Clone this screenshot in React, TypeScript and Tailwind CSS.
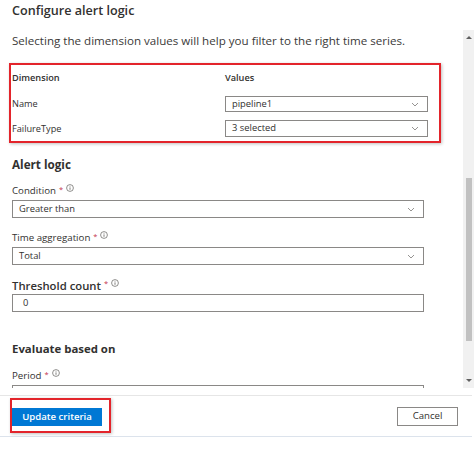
import React from "react";

const font = { fontFamily: '"Open Sans", "Noto Sans", sans-serif' };

const Chevron = () => (
  <svg width="8" height="5" viewBox="0 0 8 5" className="shrink-0">
    <path d="M1 1l3 3 3-3" fill="none" stroke="#8a8886" strokeWidth="0.9" />
  </svg>
);

const InfoIcon = () => (
  <svg width="8" height="8" viewBox="0 0 8 8" className="shrink-0">
    <circle cx="4" cy="4" r="3.4" fill="none" stroke="#605e5c" strokeWidth="0.7" />
    <path d="M4 3.4v2.4" stroke="#605e5c" strokeWidth="0.8" />
    <circle cx="4" cy="2.3" r="0.45" fill="#605e5c" />
  </svg>
);

interface FieldLabelProps {
  text: string;
  big?: boolean;
  className?: string;
}

const FieldLabel: React.FC<FieldLabelProps> = ({ text, big, className }) => (
  <div className={`flex items-start gap-[3px] text-[#323130] ${className ?? ""}`}>
    <span
      className={
        big
          ? "text-[11.3px] font-semibold leading-[15px]"
          : "text-[9.7px] leading-[14px]"
      }
    >
      {text}
    </span>
    <span className="text-[7.5px] leading-[11px] text-[#c4314b]">*</span>
    <span className={big ? "mt-[1px]" : "mt-0"}>
      <InfoIcon />
    </span>
  </div>
);

interface SelectBoxProps {
  value: string;
  className?: string;
  chevron?: boolean;
}

const SelectBox: React.FC<SelectBoxProps> = ({ value, className, chevron = true }) => (
  <div
    className={`flex items-center justify-between border border-[#8a8886] bg-white pl-[6px] pr-[8px] text-[9.4px] text-[#323130] ${className ?? ""}`}
  >
    <span>{value}</span>
    {chevron && <Chevron />}
  </div>
);

const Scrollbar = () => (
  <div className="flex w-[11px] shrink-0 flex-col items-center bg-[#f1f1f1]">
    <div className="flex h-[14px] items-center">
      <span className="h-0 w-0 border-x-[3px] border-b-[3px] border-x-transparent border-b-[#606060]" />
    </div>
    <div className="mt-[134px] h-[163px] w-[6px] bg-[#c1c1c1]" />
    <div className="flex flex-1 items-end pb-[6px]">
      <span className="h-0 w-0 border-x-[3px] border-t-[3px] border-x-transparent border-t-[#606060]" />
    </div>
  </div>
);

export default function App() {
  return (
    <div className="flex h-[450px] w-[474px] flex-col overflow-hidden bg-white" style={font}>
      <div className="flex h-[30px] items-start px-[12px] pt-[2px]">
        <h1 className="text-[12.6px] font-semibold leading-[17px] text-[#323130]">
          Configure alert logic
        </h1>
      </div>

      <div className="flex h-[358px] shrink-0">
        <div className="flex-1 overflow-hidden">
          <p className="mt-[3px] whitespace-nowrap px-[12px] text-[11.6px] leading-[16px] text-[#3b3a39]">
            Selecting the dimension values will help you filter to the right time series.
          </p>

          {/* dimension filter table */}
          <div className="ml-[9px] mt-[14px] h-[80px] w-[432px] border-2 border-[#e3242b] pl-[1px] pt-[6px] shadow-[1px_1px_3px_rgba(0,0,0,0.25)]">
            <div className="grid grid-cols-[213px_203px] text-[9.2px] text-[#323130]">
              <div className="h-[14px] font-semibold leading-[14px]">Dimension</div>
              <div className="h-[14px] font-semibold leading-[14px]">Values</div>
              <div className="mt-[11px] flex h-[16px] items-center">Name</div>
              <SelectBox value="pipeline1" className="mt-[11px] h-[16px]" />
              <div className="mt-[8px] flex h-[17px] items-center">FailureType</div>
              <SelectBox value="3 selected" className="mt-[8px] h-[17px]" />
            </div>
          </div>

          <div className="w-[424px] pl-[12px]">
            <h2 className="mt-[13px] text-[11.7px] font-bold leading-[16px] text-[#323130]">
              Alert logic
            </h2>
            <FieldLabel text="Condition" className="mt-[12px]" />
            <SelectBox value="Greater than" className="mt-[2px] h-[18px]" />

            <FieldLabel text="Time aggregation" className="mt-[13px]" />
            <SelectBox value="Total" className="mt-[2px] h-[18px]" />

            <FieldLabel text="Threshold count" big className="mt-[13px]" />
            <SelectBox value="0" chevron={false} className="mt-[1px] h-[18px] pl-[10px]" />

            <h2 className="mt-[29px] text-[11.4px] font-bold leading-[16px] text-[#323130]">
              Evaluate based on
            </h2>
            <FieldLabel text="Period" className="mt-[12px]" />
            <SelectBox value="" className="mt-[2px] h-[18px]" />
          </div>
        </div>
        <Scrollbar />
      </div>

      <footer className="mt-[7px] mr-[2px] flex items-start justify-between border-y border-t-[#e6e6e6] border-b-[#dce3ec] pb-[3px] pl-[10px] pr-[14px] pt-[2px]">
        <div className="border-2 border-[#e3242b] pb-[5px] pr-[7px] pt-[8px] shadow-[1px_1px_3px_rgba(0,0,0,0.25)]">
          <button className="flex h-[18px] w-[90px] items-center justify-center bg-[#0078d4] text-[9.6px] font-semibold text-white">
            Update criteria
          </button>
        </div>
        <button className="mt-[9px] flex h-[19px] w-[61px] items-center justify-center border border-[#8a8886] bg-white text-[9.6px] text-[#323130]">
          Cancel
        </button>
      </footer>
    </div>
  );
}
